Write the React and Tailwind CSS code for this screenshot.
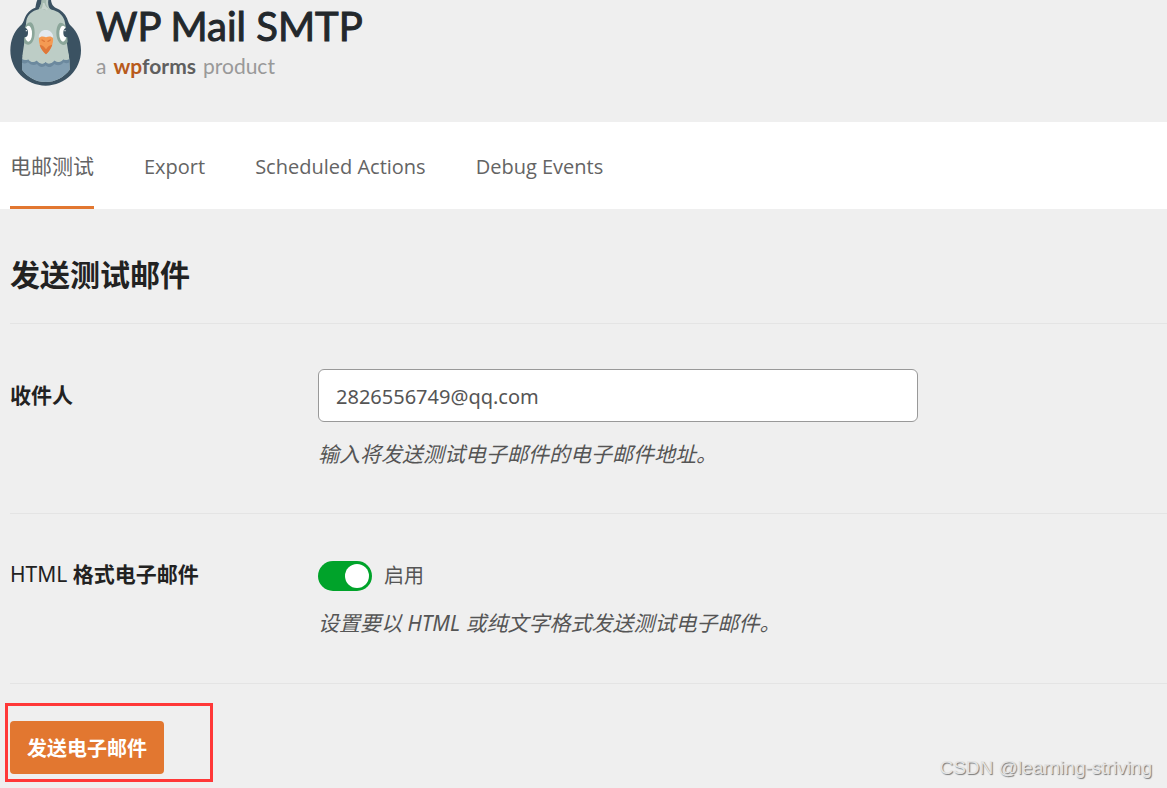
import { useState } from "react";

function PigeonLogo() {
  return (
    <svg viewBox="30 0 213 258" className="h-[86px] w-[71px] shrink-0" aria-hidden="true">
      <path
        d="M112 0C108 8 108 16 106 23C90 29 79 41 74 55C70 66 68 72 60 78C42 94 31 121 31 151C31 210 78 257 137 257C196 257 243 210 243 151C243 121 232 96 214 79C207 73 205 66 201 55C195 41 184 30 168 24C160 20 155 14 153 0Z"
        fill="#3b5262"
      />
      <path
        d="M125 0C125 10 120 20 116 28C96 32 83 45 79 62C76 84 76 108 72 134C69 152 67 168 66 184L66 209C84 232 109 246 137 246C166 246 192 231 209 209L208 178C205 152 200 132 198 104C197 86 197 72 193 60C187 43 174 33 155 29C149 27 146 22 145 14C144 9 144 4 145 0Z"
        fill="#bdcdc6"
      />
      <path
        d="M125 0C125 10 120 20 116 28C124 25 130 27 136 31C140 27 147 27 155 29C148 27 141 22 139 14C137 9 138 4 139 0Z"
        fill="#a4b9ae"
      />
      <path d="M128 8C129 17 126 24 123 28C129 26 135 27 139 31C144 27 149 27 154 29C143 27 136 21 134 10Z" fill="#c7d4cd" />
      <path
        d="M66 181C73 185 80 183 84 180C92 192 104 191 111 184C120 198 131 196 137 188C145 199 157 194 163 184C173 194 184 190 191 180C197 184 203 183 208 180L209 209C192 231 166 246 137 246C109 246 84 232 66 209Z"
        fill="#839fb2"
      />
      <path
        d="M66 177C73 181 80 180 84 177C92 188 104 187 111 181C120 194 131 192 137 185C145 195 157 190 163 181C173 190 184 186 191 177C197 181 203 180 208 177L208 187C202 191 196 190 191 187C184 197 172 198 163 192C155 203 144 204 137 196C129 204 118 202 111 192C102 197 91 195 84 187C79 191 72 191 66 188Z"
        fill="#6c899e"
      />
      <path
        d="M68 167C74 180 80 183 85 177C93 189 104 188 110 181C119 194 132 192 137 185C145 194 157 190 163 181C173 189 183 185 189 177C195 182 202 180 207 168L195 130L78 130Z"
        fill="#bdcdc6"
      />
      <path d="M91 67C82 67 76 76 74 88L72 126C76 134 85 137 91 132C100 126 104 113 104 98C104 81 99 68 91 67Z" fill="#8ba69a" />
      <path d="M182 68C191 68 197 77 200 89L203 126C199 134 190 137 184 133C174 127 169 113 169 99C169 82 174 69 182 68Z" fill="#8ba69a" />
      <ellipse cx="85" cy="101" rx="11" ry="24" fill="#fff" />
      <ellipse cx="189" cy="101" rx="11" ry="24" fill="#fff" />
      <path d="M68 84L77 84C82 86 84 92 84 99C84 106 81 111 76 112L68 112Z" fill="#3b5262" />
      <path d="M206 84L197 84C192 86 190 92 190 99C190 106 193 111 198 112L206 112Z" fill="#3b5262" />
      <circle cx="79" cy="92" r="2" fill="#fff" />
      <circle cx="195" cy="92" r="2" fill="#fff" />
      <path d="M116 112C117 98 125 90 137 90C150 90 158 98 160 112C151 117 124 117 116 112Z" fill="#e4e9ef" />
      <path d="M117 115C121 108 130 108 138 112C146 108 155 108 159 115C161 132 151 151 138 163C125 151 115 132 117 115Z" fill="#f49a53" />
      <path d="M119 135C126 135 133 139 138 148C143 139 150 135 157 134C153 146 146 156 138 163C130 156 122 146 119 135Z" fill="#df7739" />
      <path d="M126 120L133 124M151 120L144 124" stroke="#df7739" strokeWidth="4" strokeLinecap="round" />
    </svg>
  );
}

const tabs = ["电邮测试", "Export", "Scheduled Actions", "Debug Events"];

function Tabs() {
  return (
    <nav className="flex h-[87px] gap-[50px] bg-white px-[10px] font-['Open_Sans','Noto_Sans_CJK_SC',sans-serif] text-[20px] text-[#646464]">
      {tabs.map((tab, index) => (
        <a
          key={tab}
          href="#"
          aria-current={index === 0 ? "page" : undefined}
          className={
            index === 0
              ? "flex items-center border-b-3 border-[#e27730] pt-[6px] text-[21px]"
              : "flex items-center border-b-3 border-transparent pt-[6px]"
          }
        >
          {tab}
        </a>
      ))}
    </nav>
  );
}

export default function App() {
  const [email, setEmail] = useState("2826556749@qq.com");
  const [html, setHtml] = useState(true);

  return (
    <div className="relative min-h-screen bg-[#efefef] font-['Noto_Sans','Noto_Sans_CJK_SC',sans-serif] text-[#555]">
      <header className="flex h-[122px] items-start gap-[15px] px-[10px]">
        <PigeonLogo />
        <div className="pt-[2px] font-['Lato',sans-serif]">
          <h1 className="text-[40px] leading-[48px] whitespace-nowrap text-[#23282c] [-webkit-text-stroke:1px_#23282c]">
            WP Mail SMTP
          </h1>
          <p className="flex items-baseline gap-[7px] text-[21px] leading-[32px] text-[#999]">
            <span>a</span>
            <span className="font-bold text-[#5f5f5f]">
              <span className="text-[#b85a1b]">wp</span>forms
            </span>
            <span>product</span>
          </p>
        </div>
      </header>

      <Tabs />

      <main className="pl-[10px]">
        <h2 className="border-b border-[#e4e4e4] pt-[44px] pb-[26px] text-[30px] leading-[44px] font-bold text-[#222]">
          发送测试邮件
        </h2>

        <form onSubmit={(event) => event.preventDefault()}>
          <div className="grid grid-cols-[308px_1fr] border-b border-[#e4e4e4] pt-[45px] pb-[44px]">
            <label htmlFor="recipient" className="pt-[11px] text-[21px] leading-[30px] font-bold text-[#222]">
              收件人
            </label>
            <div>
              <input
                id="recipient"
                type="email"
                value={email}
                onChange={(event) => setEmail(event.target.value)}
                className="block h-[53px] w-full max-w-[600px] rounded-md border border-[#999] bg-white px-[17px] pt-[2px] text-[20px] text-[#555]"
              />
              <p className="mt-[17px] text-[21px] leading-[30px] text-[#555] italic">输入将发送测试电子邮件的电子邮件地址。</p>
            </div>
          </div>

          <div className="grid grid-cols-[308px_1fr] border-b border-[#e4e4e4] pt-[45px] pb-[45px]">
            <label htmlFor="html-mail" className="text-[21px] leading-[30px] font-bold text-[#222]">
              <span className="font-normal">HTML</span> 格式电子邮件
            </label>
            <div>
              <label className="mt-[2px] flex items-center gap-[12px] text-[20px] leading-[30px] text-[#555]">
                <input
                  id="html-mail"
                  type="checkbox"
                  role="switch"
                  checked={html}
                  onChange={(event) => setHtml(event.target.checked)}
                  className="flex h-[30px] w-[54px] appearance-none items-center rounded-full bg-[#999] px-[3px] before:size-[24px] before:rounded-full before:bg-white before:content-[''] checked:justify-end checked:bg-[#00a32a]"
                />
                启用
              </label>
              <p className="mt-[17px] text-[21px] leading-[30px] text-[#555] italic">
                设置要以 HTML 或纯文字格式发送测试电子邮件。
              </p>
            </div>
          </div>

          <div className="relative pt-[37px] pb-[14px]">
            <button
              type="submit"
              className="h-[53px] rounded-sm bg-[#e27730] px-[17px] pt-[2px] text-[20px] font-bold text-white"
            >
              发送电子邮件
            </button>
            <div className="pointer-events-none absolute top-[19px] -left-[5px] h-[79px] w-[208px] border-3 border-[#ff3838]" />
          </div>
        </form>
      </main>

      <p className="absolute right-[15px] bottom-[7px] font-['Liberation_Sans',sans-serif] text-[19px] leading-[26px] text-[#e4e4e4] [text-shadow:1px_1px_1px_#777]">
        CSDN @learning-striving
      </p>
    </div>
  );
}
